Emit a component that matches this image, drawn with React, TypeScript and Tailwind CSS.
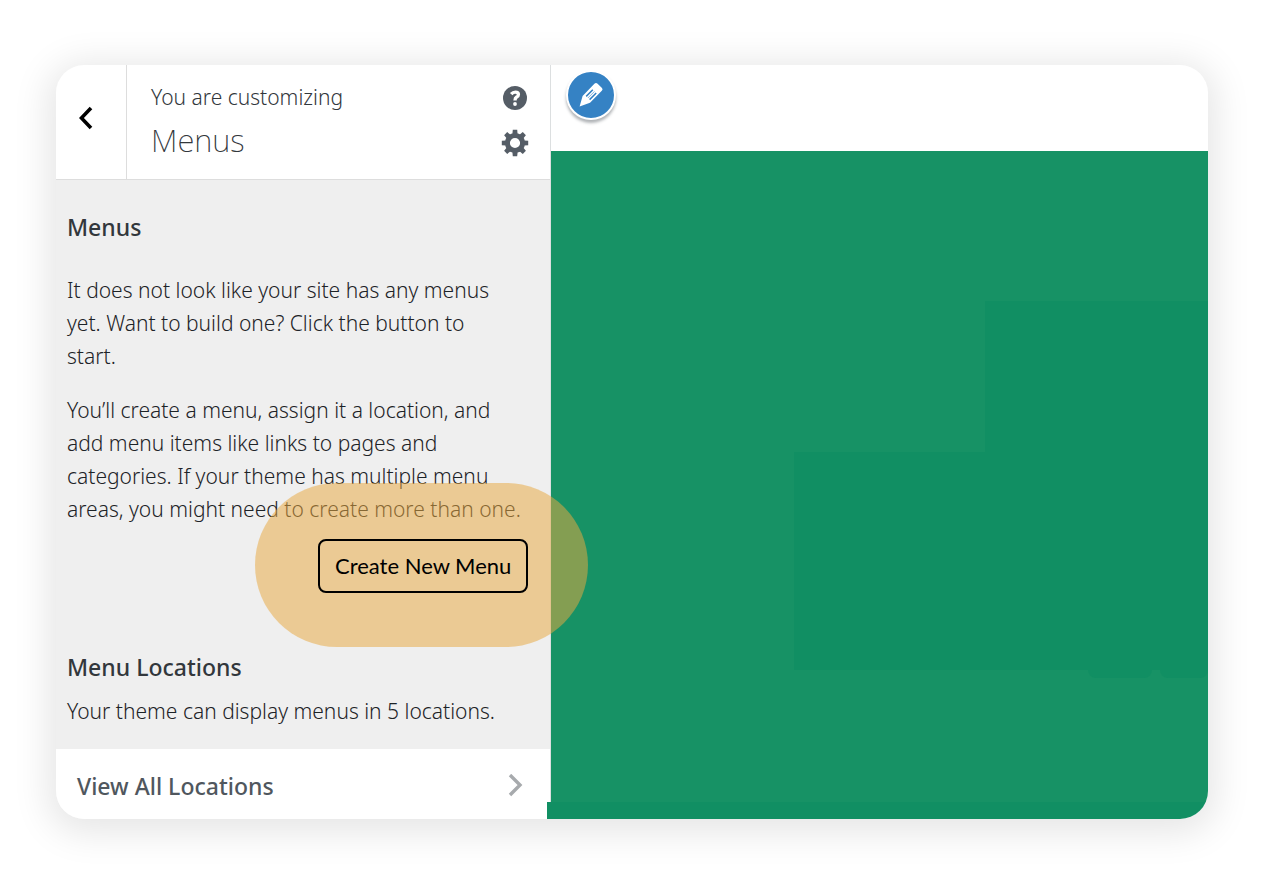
import type { ReactNode } from 'react';

const gearTeeth = [0, 45, 90, 135, 180, 225, 270, 315];

function BackIcon() {
  return (
    <svg width="16" height="24" viewBox="0 0 16 24" fill="none" aria-hidden="true">
      <path d="M12 2 L2.4 12 L12 22" stroke="#000" strokeWidth="3.6" />
    </svg>
  );
}

function HelpIcon() {
  return (
    <svg width="24" height="24" viewBox="0 0 24 24" aria-hidden="true">
      <circle cx="12" cy="12" r="12" fill="#555d66" />
      <path
        d="M8.2 8.1 Q10 6.1 12.4 6.1 Q15.4 6.1 15.4 8.4 Q15.4 10 13.6 11.1 Q12 12 12 14.4"
        stroke="#fff"
        strokeWidth="3.4"
        fill="none"
      />
      <circle cx="12" cy="18" r="1.9" fill="#fff" />
    </svg>
  );
}

function GearIcon() {
  return (
    <svg width="28" height="28" viewBox="0 0 28 28" aria-hidden="true">
      <circle cx="14" cy="14" r="7.6" fill="none" stroke="#555d66" strokeWidth="5" />
      {gearTeeth.map((angle) => (
        <path key={angle} d="M11.4 5 L11.8 0.8 H16.2 L16.6 5 Z" fill="#555d66" transform={`rotate(${angle} 14 14)`} />
      ))}
    </svg>
  );
}

function PencilIcon() {
  return (
    <svg width="26" height="26" viewBox="0 0 26 26" aria-hidden="true">
      <path d="M1.6 24.4 L4.6 14 L16.4 1.8 Q18 0.4 19.6 1.8 L24 6 Q25.2 7.4 23.8 8.8 L12 20.8 Z" fill="#fff" />
      <path d="M8.2 14.4 L14.8 7.8 M11.6 17.6 L18.2 11" stroke="#3582c4" strokeWidth="1.5" />
      <path d="M9.9 16 L16.5 9.4" stroke="#3582c4" strokeWidth="0.6" />
    </svg>
  );
}

function ChevronIcon() {
  return (
    <svg width="16" height="24" viewBox="0 0 16 24" fill="none" aria-hidden="true">
      <path d="M2 1 L12 11 L2 21" stroke="#a7aaad" strokeWidth="3.4" />
    </svg>
  );
}

function SectionTitle({ children }: { children: ReactNode }) {
  return <h2 className="text-[23px] leading-8 font-medium text-[#32373c]">{children}</h2>;
}

function Sidebar() {
  return (
    <aside className="flex w-[43%] shrink-0 flex-col border-r border-[#dcdfe0] bg-[#efefef]">
      <header className="flex h-[115px] border-b border-[#dddddd] bg-white">
        <button aria-label="Back" className="flex w-[71px] items-center justify-center border-r border-[#dddddd] pr-2 pb-2">
          <BackIcon />
        </button>
        <div className="flex flex-1 justify-between pt-4 pr-[21px] pl-6">
          <div className="text-[#32373c]">
            <p className="text-[21px] leading-[33px] font-light">You are customizing</p>
            <h1 className="text-[31px] leading-[52px] font-extralight">Menus</h1>
          </div>
          <div className="flex flex-col items-center gap-[19px] pt-[5px]">
            <button aria-label="Help">
              <HelpIcon />
            </button>
            <button aria-label="Menu options">
              <GearIcon />
            </button>
          </div>
        </div>
      </header>

      <div className="px-[11px] pt-[31px] text-[21px] leading-[33px] font-light whitespace-nowrap text-[#1d2327]">
        <SectionTitle>Menus</SectionTitle>
        <p className="mt-[31px]">
          It does not look like your site has any menus
          <br />
          yet. Want to build one? Click the button to
          <br />
          start.
        </p>
        <p className="mt-[21px]">
          You’ll create a menu, assign it a location, and
          <br />
          add menu items like links to pages and
          <br />
          categories. If your theme has multiple menu
          <br />
          areas, you might need to create more than one.
        </p>

        <div className="mt-[13px] flex justify-end pr-[11px]">
          <div className="relative">
            {/* spotlight around the button, spills over the preview */}
            <div className="pointer-events-none absolute -top-14 -right-[60px] -bottom-[54px] -left-[63px] z-10 rounded-full bg-[#e8a842]/52" />
            <button className="relative z-20 h-[54px] rounded-lg border-2 border-black px-[15px] font-['Lato',sans-serif] text-[22px] leading-8 font-normal text-black">
              Create New Menu
            </button>
          </div>
        </div>

        <div className="mt-[58px]">
          <SectionTitle>Menu Locations</SectionTitle>
          <p className="mt-3">Your theme can display menus in 5 locations.</p>
        </div>
      </div>

      <button className="mt-[21px] flex h-[70px] items-center justify-between bg-white pt-1 pr-[26px] pl-[21px] text-left text-[23px] leading-8 font-medium text-[#50575e]">
        View All Locations
        <ChevronIcon />
      </button>
    </aside>
  );
}

function Preview() {
  return (
    <main className="flex flex-1 flex-col">
      <div className="h-[86px] pt-[5px] pl-[15px]">
        <button
          aria-label="Edit"
          className="flex h-[50px] w-[50px] items-center justify-center rounded-full border-2 border-white bg-[#3582c4] shadow-[0_3px_3px_rgba(60,67,74,0.4)]"
        >
          <PencilIcon />
        </button>
      </div>
      <div className="flex flex-1 flex-col bg-[#179265] pt-[150px]">
        <div className="ml-[66%] h-[151px] bg-[#118f63]" />
        <div className="ml-[37%] h-[218px] bg-[#118f63]" />
        <div className="flex justify-end gap-2">
          <div className="h-2 w-16 rounded-b-full bg-[#118f63]" />
          <div className="h-2 w-12 rounded-b-full bg-[#118f63]" />
        </div>
      </div>
      <div className="relative -ml-1 h-[17px] bg-[#118f63]" />
    </main>
  );
}

export default function App() {
  return (
    <div className="min-h-screen bg-white px-14 pt-[65px] pb-[61px] font-['Noto_Sans',sans-serif]">
      <div className="flex overflow-hidden rounded-[28px] bg-white shadow-[0_6px_36px_8px_rgba(0,0,0,0.10)]">
        <Sidebar />
        <Preview />
      </div>
    </div>
  );
}
